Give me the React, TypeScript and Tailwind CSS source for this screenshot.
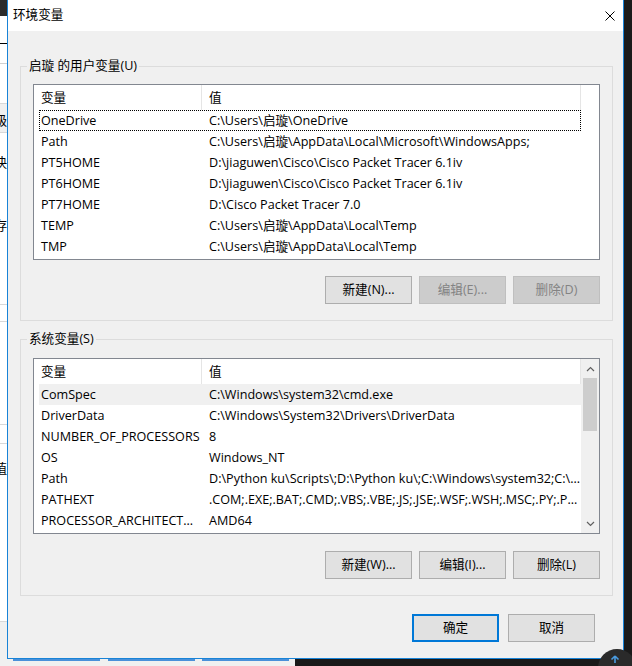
import React from 'react';

type Row = [string, string];

const userVars: Row[] = [
  ['OneDrive', 'C:\\Users\\启璇\\OneDrive'],
  ['Path', 'C:\\Users\\启璇\\AppData\\Local\\Microsoft\\WindowsApps;'],
  ['PT5HOME', 'D:\\jiaguwen\\Cisco\\Cisco Packet Tracer 6.1iv'],
  ['PT6HOME', 'D:\\jiaguwen\\Cisco\\Cisco Packet Tracer 6.1iv'],
  ['PT7HOME', 'D:\\Cisco Packet Tracer 7.0'],
  ['TEMP', 'C:\\Users\\启璇\\AppData\\Local\\Temp'],
  ['TMP', 'C:\\Users\\启璇\\AppData\\Local\\Temp'],
];

const systemVars: Row[] = [
  ['ComSpec', 'C:\\Windows\\system32\\cmd.exe'],
  ['DriverData', 'C:\\Windows\\System32\\Drivers\\DriverData'],
  ['NUMBER_OF_PROCESSORS', '8'],
  ['OS', 'Windows_NT'],
  ['Path', 'D:\\Python ku\\Scripts\\;D:\\Python ku\\;C:\\Windows\\system32;C:\\...'],
  ['PATHEXT', '.COM;.EXE;.BAT;.CMD;.VBS;.VBE;.JS;.JSE;.WSF;.WSH;.MSC;.PY;.P...'],
  ['PROCESSOR_ARCHITECT...', 'AMD64'],
];

function Chevron({ down }: { down?: boolean }) {
  return (
    <svg width="9" height="6" viewBox="0 0 9 6" className={down ? 'rotate-180' : ''}>
      <path d="M1 5 L4.5 1.5 L8 5" fill="none" stroke="#606060" strokeWidth="1.2" />
    </svg>
  );
}

function VarList({ rows, focused, selected, scroll }: { rows: Row[]; focused?: number; selected?: number; scroll?: boolean }) {
  return (
    <div className="ml-[12px] flex h-[176px] w-[567px] border border-[#828790] bg-white">
      <div className="flex w-[547px] flex-col">
        {/* column header */}
        <div className="flex h-[25px] items-center">
          <div className="flex h-full w-[168px] items-center border-r border-[#e5e5e5] pl-[7px] pt-[1px]">变量</div>
          <div className="flex h-full w-[379px] items-center border-r border-[#e5e5e5] pl-[7px] pt-[1px]">值</div>
        </div>
        {rows.map(([name, value], i) => (
          <div
            key={name + i}
            className={`ml-[5px] flex h-[21px] w-[542px] items-center border pt-[1px] ${
              focused === i ? 'border-dotted border-black' : 'border-transparent'
            } ${selected === i ? 'bg-[#f0f0f0]' : ''}`}
          >
            <div className="w-[168px] overflow-hidden whitespace-nowrap pl-[1px]">{name}</div>
            <div className="flex-1 overflow-hidden whitespace-nowrap pl-[1px]">{value}</div>
          </div>
        ))}
      </div>
      {scroll ? (
        <div className="flex w-[18px] flex-col bg-[#f0f0f0]">
          <div className="flex h-[19px] items-center justify-center">
            <Chevron />
          </div>
          <div className="mx-[2px] h-[53px] bg-[#cdcdcd]" />
          <div className="flex-1" />
          <div className="flex h-[19px] items-center justify-center">
            <Chevron down />
          </div>
        </div>
      ) : null}
    </div>
  );
}

function Btn({ label, disabled, primary, className = '' }: { label: string; disabled?: boolean; primary?: boolean; className?: string }) {
  const look = disabled
    ? 'border border-[#bfbfbf] bg-[#cccccc] text-[#838383]'
    : primary
    ? 'border-2 border-[#0078d7] bg-[#e1e1e1]'
    : 'border border-[#adadad] bg-[#e1e1e1]';
  return (
    <div className={`flex h-[28px] w-[87px] items-center justify-center ${look} ${className}`}>{label}</div>
  );
}

function GroupBox({ title, children, className = '' }: { title: string; children: React.ReactNode; className?: string }) {
  return (
    <div className={`relative w-[593px] border border-[#dcdcdc] ${className}`}>
      <span className="absolute -top-[9px] left-[6px] bg-[#f0f0f0] px-[2px] leading-[16px]">{title}</span>
      {children}
    </div>
  );
}

function LeftStrip() {
  const Cut = ({ ch, h }: { ch: string; h: number }) => (
    <div className="flex items-center justify-end overflow-hidden" style={{ height: h }}>
      <span className="shrink-0">{ch}</span>
    </div>
  );
  return (
    <div className="flex w-[7px] flex-col overflow-hidden bg-white">
      <div className="h-[16px] bg-[#2b2b2b]" />
      <div className="h-[27px]" />
      <div className="h-[1px] bg-black" />
      <div className="h-[19px]" />
      <div className="h-[1px] bg-[#d0d0d0]" />
      <div className="h-[39px]" />
      <div className="h-[30px] border-t border-b border-[#d8d8d8] bg-[#f0f0f0]">
        <div className="flex h-full items-end justify-end overflow-hidden pb-[1px]">
          <span className="shrink-0">级</span>
        </div>
      </div>
      <div className="h-[22px]" />
      <Cut ch="决" h={16} />
      <div className="h-[47px]" />
      <Cut ch="存" h={16} />
      <div className="h-[70px]" />
      <div className="h-[1px] bg-[#d8d8d8]" />
      <div className="h-[16px]" />
      <div className="h-[1px] bg-[#d8d8d8]" />
      <div className="h-[102px]" />
      <div className="h-[1px] bg-[#d8d8d8]" />
      <div className="h-[18px]" />
      <div className="h-[1px] bg-[#d8d8d8]" />
      <div className="h-[18px]" />
      <Cut ch="值" h={14} />
      <div className="flex-1" />
      <div className="h-[38px] border-t border-[#d8d8d8] bg-[#f0f0f0]" />
    </div>
  );
}

export default function App() {
  return (
    <div className="relative flex h-[666px] w-[632px] flex-col overflow-hidden bg-[#191919] font-['Open_Sans','Noto_Sans_CJK_SC',sans-serif] text-[12.6px] text-black">
      <div className="flex h-[659px]">
        <LeftStrip />

        {/* dialog */}
        <div className="flex w-[617px] flex-col border-x border-b border-[#1883d7] bg-[#f0f0f0]">
          {/* title bar */}
          <div className="flex h-[31px] items-center justify-between bg-white pl-[5px] pr-[8px]">
            <span>环境变量</span>
            <svg width="10" height="10" viewBox="0 0 10 10">
              <path d="M0.5 0.5 L9.5 9.5 M9.5 0.5 L0.5 9.5" stroke="#000" strokeWidth="1" />
            </svg>
          </div>

          <div className="flex flex-col pl-[12px]">
            <GroupBox title="启璇 的用户变量(U)" className="mt-[35px]">
              <div className="mt-[17px]">
                <VarList rows={userVars} focused={0} />
              </div>
              <div className="ml-[12px] mt-[16px] flex w-[567px] justify-end gap-[7px] pb-[16px]">
                <Btn label="新建(N)..." />
                <Btn label="编辑(E)..." disabled />
                <Btn label="删除(D)" disabled />
              </div>
            </GroupBox>

            <GroupBox title="系统变量(S)" className="mt-[18px]">
              <div className="mt-[18px]">
                <VarList rows={systemVars} selected={0} scroll />
              </div>
              <div className="ml-[12px] mt-[17px] flex w-[567px] justify-end gap-[7px] pb-[16px]">
                <Btn label="新建(W)..." />
                <Btn label="编辑(I)..." />
                <Btn label="删除(L)" />
              </div>
            </GroupBox>

            <div className="mt-[18px] flex w-[593px] justify-end gap-[9px] pr-[18px]">
              <Btn label="确定" primary className="w-[86px]" />
              <Btn label="取消" />
            </div>
          </div>
        </div>

        <div className="flex-1 bg-[#1a1a1a]" />
      </div>

      {/* taskbar remnants below the dialog */}
      <div className="flex h-[7px]">
        <div className="flex w-[295px] items-start bg-[#f0f0f0] pl-[13px]">
          <div className="h-[2px] w-[87px] bg-[#4a90d9]" />
          <div className="ml-[8px] h-[2px] w-[87px] bg-[#4a90d9]" />
          <div className="ml-[7px] h-[2px] w-[87px] bg-[#4a90d9]" />
        </div>
        <div className="flex-1 bg-[#191919]" />
      </div>

      {/* floating round button at the corner */}
      <div className="absolute left-[598px] top-[649px] flex h-[38px] w-[38px] justify-center rounded-full bg-[#2a2a2a] pt-[6px]">
        <svg width="10" height="9" viewBox="0 0 10 9" className="-ml-[4px]">
          <path d="M5 1 L1.5 4.5 M5 1 L8.5 4.5 M5 1 L5 8" stroke="#4a9be0" strokeWidth="1.6" fill="none" />
        </svg>
      </div>
    </div>
  );
}
